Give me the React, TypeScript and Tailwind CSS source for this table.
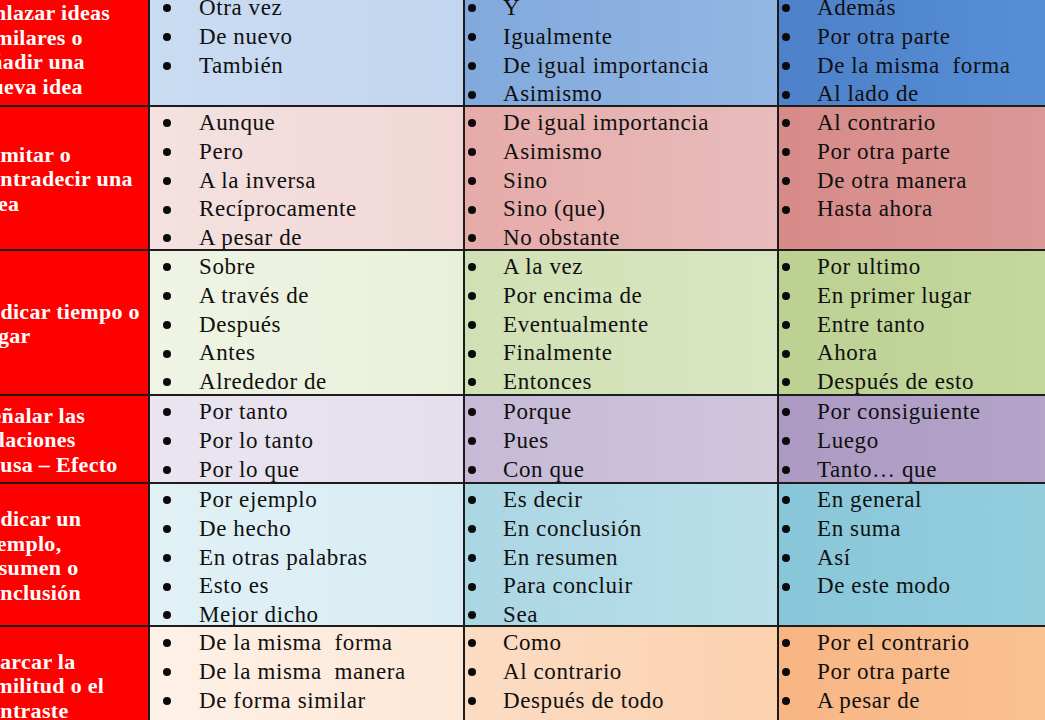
const rows = [
  {
    h: "h-[115px]",
    label: ["Enlazar ideas", "similares o", "añadir una", "nueva idea"],
    cells: [
      { bg: "bg-linear-to-r from-[#cadcf2] to-[#c3d6ef]", items: ["Otra vez", "De nuevo", "También"] },
      { bg: "bg-linear-to-r from-[#81a9dc] to-[#93b7e4]", items: ["Y", "Igualmente", "De igual importancia", "Asimismo"] },
      { bg: "bg-linear-to-r from-[#4d81ca] to-[#5890d6]", items: ["Además", "Por otra parte", "De la misma  forma", "Al lado de"] },
    ],
  },
  {
    h: "h-[144px]",
    label: ["Limitar o", "contradecir una", "idea"],
    cells: [
      { bg: "bg-linear-to-r from-[#f4e1e0] to-[#f1d8d7]", items: ["Aunque", "Pero", "A la inversa", "Recíprocamente", "A pesar de"] },
      { bg: "bg-linear-to-r from-[#e6aba9] to-[#e8bcbb]", items: ["De igual importancia", "Asimismo", "Sino", "Sino (que)", "No obstante"] },
      { bg: "bg-linear-to-r from-[#d78b89] to-[#da9997]", items: ["Al contrario", "Por otra parte", "De otra manera", "Hasta ahora"] },
    ],
  },
  {
    h: "h-[145px]",
    label: ["Indicar tiempo o", "lugar"],
    cells: [
      { bg: "bg-linear-to-r from-[#eff4e4] to-[#e9f0da]", items: ["Sobre", "A través de", "Después", "Antes", "Alrededor de"] },
      { bg: "bg-linear-to-r from-[#d1e0b4] to-[#d9e6c2]", items: ["A la vez", "Por encima de", "Eventualmente", "Finalmente", "Entonces"] },
      { bg: "bg-linear-to-r from-[#bdd193] to-[#c5d89f]", items: ["Por ultimo", "En primer lugar", "Entre tanto", "Ahora", "Después de esto"] },
    ],
  },
  {
    h: "h-[88px]",
    label: ["Señalar las", "relaciones", "causa – Efecto"],
    cells: [
      { bg: "bg-linear-to-r from-[#eae5f0] to-[#e4dfeb]", items: ["Por tanto", "Por lo tanto", "Por lo que"] },
      { bg: "bg-linear-to-r from-[#c6bad6] to-[#cfc5dd]", items: ["Porque", "Pues", "Con que"] },
      { bg: "bg-linear-to-r from-[#ac9ac3] to-[#b5a5c9]", items: ["Por consiguiente", "Luego", "Tanto… que"] },
    ],
  },
  {
    h: "h-[143px]",
    label: ["Indicar un", "ejemplo,", "resumen o", "conclusión"],
    cells: [
      { bg: "bg-linear-to-r from-[#e1f1f6] to-[#d8edf3]", items: ["Por ejemplo", "De hecho", "En otras palabras", "Esto es", "Mejor dicho"] },
      { bg: "bg-linear-to-r from-[#abd6e4] to-[#badfe9]", items: ["Es decir", "En conclusión", "En resumen", "Para concluir", "Sea"] },
      { bg: "bg-linear-to-r from-[#88c6d9] to-[#95cfde]", items: ["En general", "En suma", "Así", "De este modo"] },
    ],
  },
  {
    h: "h-[118px]",
    label: ["Marcar la", "similitud o el", "contraste"],
    cells: [
      { bg: "bg-linear-to-r from-[#fef1e7] to-[#fde7d6]", items: ["De la misma  forma", "De la misma  manera", "De forma similar", "En comparación"] },
      { bg: "bg-linear-to-r from-[#fbdcc3] to-[#fcd1ae]", items: ["Como", "Al contrario", "Después de todo", "En contraste"] },
      { bg: "bg-linear-to-r from-[#f8b584] to-[#fac395]", items: ["Por el contrario", "Por otra parte", "A pesar de", "Sin embargo"] },
    ],
  },
];

// column geometry: bullet offset and text offset differ for the first list column
const colStyle = [
  { w: "w-[315px] border-r-2", bullet: "pl-[13px]", gap: "w-[28px]" },
  { w: "w-[314px] border-r-2", bullet: "pl-[3px]", gap: "w-[27px]" },
  { w: "flex-1", bullet: "pl-[3px]", gap: "w-[27px]" },
];

const Cell = ({ items, bg, idx }: { items: string[]; bg: string; idx: number }) => {
  const c = colStyle[idx];
  return (
    <div className={`${c.w} ${bg} border-[#1c1c1c] shrink-0 pt-[2px] ${c.bullet}`}>
      {items.map((t) => (
        <div key={t} className="flex items-center h-[28.75px]">
          <span className="w-[8px] h-[8px] rounded-full bg-[#0a0a0a] shrink-0" />
          <span className={`${c.gap} shrink-0`} />
          <span className="whitespace-pre text-[23px] tracking-[0.6px] text-[#101010]">{t}</span>
        </div>
      ))}
    </div>
  );
};

export default function App() {
  return (
    <div className="w-[1045px] h-[720px] overflow-hidden bg-white" style={{ fontFamily: '"Liberation Serif", "Times New Roman", serif' }}>
      <div className="-mt-[8px] -ml-[21px] w-[1100px] flex flex-col">
        {rows.map((r, i) => (
          <div key={i} className={`flex ${r.h} border-b-2 border-[#1c1c1c] box-border shrink-0`}>
            <div className="w-[171px] shrink-0 bg-[#ff0000] border-r-2 border-[#1c1c1c] flex flex-col justify-center pt-[3px]">
              {r.label.map((l) => (
                <div key={l} className="text-white font-bold text-[22px] tracking-[0.3px] leading-[24.5px] whitespace-nowrap">
                  {l}
                </div>
              ))}
            </div>
            {r.cells.map((c, j) => (
              <Cell key={j} items={c.items} bg={c.bg} idx={j} />
            ))}
          </div>
        ))}
      </div>
    </div>
  );
}
